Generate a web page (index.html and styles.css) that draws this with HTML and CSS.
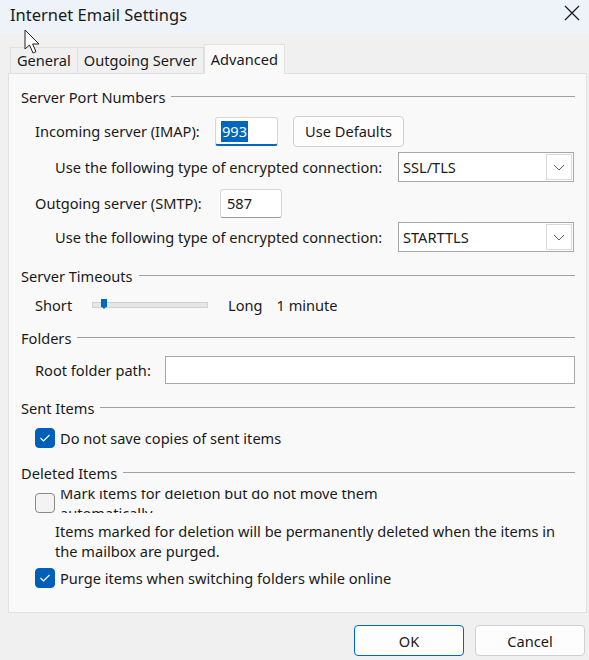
FILE: index.html
```html
<!DOCTYPE html>
<html lang="en">
<head>
    <meta charset="UTF-8">
    <meta name="viewport" content="width=device-width, initial-scale=1.0">
    <title>Internet Email Settings</title>
    <link rel="stylesheet" href="styles.css">
</head>
<body>

    <div class="titlebar">
        <span class="title">Internet Email Settings</span>
        <svg class="close" width="16" height="16" viewBox="0 0 16 16">
            <path d="M1 1 L15 15 M15 1 L1 15" stroke="#1a1a1a" stroke-width="1.3" fill="none"/>
        </svg>
    </div>

    <div class="tabs">
        <div class="tab">General</div>
        <div class="tab">Outgoing Server</div>
        <div class="tab active">Advanced</div>
    </div>

    <div class="panel">
        <div class="group-head">Server Port Numbers</div>

        <div class="row row-imap">
            <span class="label lbl-imap">Incoming server (IMAP):</span>
            <div class="port focused"><span class="selected-text">993</span></div>
            <button class="btn defaults">Use Defaults</button>
        </div>

        <div class="row row-enc">
            <span class="label sub lbl-enc">Use the following type of encrypted connection:</span>
            <div class="combo">
                <span>SSL/TLS</span>
                <span class="combo-arrow">
                    <svg width="12" height="7" viewBox="0 0 12 7"><path d="M1 1 L6 6 L11 1" stroke="#606060" stroke-width="1" fill="none"/></svg>
                </span>
            </div>
        </div>

        <div class="row row-smtp">
            <span class="label lbl-smtp">Outgoing server (SMTP):</span>
            <div class="port">587</div>
        </div>

        <div class="row row-enc2">
            <span class="label sub lbl-enc">Use the following type of encrypted connection:</span>
            <div class="combo">
                <span>STARTTLS</span>
                <span class="combo-arrow">
                    <svg width="12" height="7" viewBox="0 0 12 7"><path d="M1 1 L6 6 L11 1" stroke="#606060" stroke-width="1" fill="none"/></svg>
                </span>
            </div>
        </div>

        <div class="group-head head-timeouts">Server Timeouts</div>

        <div class="row row-slider">
            <span class="label lbl-short">Short</span>
            <div class="track"><span class="thumb"></span></div>
            <span class="lbl-long">Long</span>
            <span>1 minute</span>
        </div>

        <div class="group-head head-folders">Folders</div>

        <div class="row row-root">
            <span class="label lbl-root">Root folder path:</span>
            <div class="textbox"></div>
        </div>

        <div class="group-head head-sent">Sent Items</div>

        <div class="row row-check row-sent">
            <span class="check on">
                <svg width="12" height="10" viewBox="0 0 12 10"><path d="M1.5 5 L4.5 8 L10.5 2" stroke="#fff" stroke-width="1.2" fill="none"/></svg>
            </span>
            <span>Do not save copies of sent items</span>
        </div>

        <div class="group-head head-deleted">Deleted Items</div>

        <div class="row row-check row-mark">
            <span class="check"></span>
            <div class="clipped"><div class="clipped-inner">Mark items for deletion but do not move them<br>automatically</div></div>
        </div>

        <p class="note">Items marked for deletion will be permanently deleted when the items in the mailbox are purged.</p>

        <div class="row row-check row-purge">
            <span class="check on">
                <svg width="12" height="10" viewBox="0 0 12 10"><path d="M1.5 5 L4.5 8 L10.5 2" stroke="#fff" stroke-width="1.2" fill="none"/></svg>
            </span>
            <span>Purge items when switching folders while online</span>
        </div>
    </div>

    <div class="footer">
        <button class="btn ok">OK</button>
        <button class="btn cancel">Cancel</button>
    </div>

    <!-- mouse pointer -->
    <svg class="cursor" width="19" height="27" viewBox="0 0 19 27">
        <path d="M1 1 L1 20 L5.5 16 L9 24 L12 22.6 L8.6 15 L15 15 Z" fill="#fff" stroke="#222" stroke-width="1"/>
    </svg>

</body>
</html>
```

FILE: styles.css
```css
body {
    margin: 0;
    padding: 0;
    width: 589px;
    height: 660px;
    overflow: hidden;
    position: relative;
    background-color: #f0f0f0;
    color: #1a1a1a;
    font-family: "Noto Sans", "Open Sans", sans-serif;
    font-size: 14.6px;
}

button {
    font-family: inherit;
    font-size: 14.6px;
    color: #1a1a1a;
}

/* Title bar */
.titlebar {
    height: 34px;
    background-color: #eef3f9;
    display: flex;
    align-items: center;
    justify-content: space-between;
    padding: 0 9px 0 10px;
}

.title {
    font-size: 16.5px;
    margin-top: -6px;
}

.close {
    margin-top: -8px;
}

/* Tabs */
.tabs {
    display: flex;
    align-items: flex-end;
    padding-left: 10px;
    margin-top: 10px;
    height: 29px;
    position: relative;
    z-index: 1;
}

.tab {
    height: 25px;
    line-height: 25px;
    padding: 0 6px;
    border: 1px solid #e0e0e0;
    border-bottom: none;
    background-color: #f0f0f0;
}

.tab + .tab {
    border-left: none;
}

.tab.active {
    height: 29px;
    line-height: 28px;
    background-color: #f9f9f9;
    margin-bottom: -1px;
    border-left: 1px solid #e0e0e0;
}

/* Panel */
.panel {
    margin-left: 8px;
    width: 554px;
    height: 525px;
    background-color: #f9f9f9;
    border: 1px solid #e0e0e0;
    padding: 13px 11px 0 12px;
}

.group-head {
    display: flex;
    align-items: center;
    height: 20px;
    gap: 6px;
}

.group-head::after {
    content: "";
    flex: 1;
    height: 1px;
    background-color: #a0a0a0;
    margin-top: -2px;
}

.head-timeouts { margin-top: 14px; }
.head-folders { margin-top: 13px; }
.head-sent { margin-top: 14px; }
.head-deleted { margin-top: 15px; }

.row {
    display: flex;
    align-items: center;
    padding-left: 14px;
}

.label {
    flex: none;
}

.sub {
    padding-left: 20px;
}

.row-imap { height: 32px; margin-top: 8px; }
.row-enc { height: 30px; margin-top: 5px; }
.row-smtp { height: 30px; margin-top: 6px; }
.row-enc2 { height: 30px; margin-top: 4px; }
.row-slider { height: 20px; margin-top: 9px; }
.row-root { height: 28px; margin-top: 8px; }
.row-sent { height: 20px; margin-top: 10px; }
.row-mark { height: 20px; margin-top: 10px; }
.row-purge { height: 20px; margin-top: 7px; }

.lbl-imap { width: 180px; }
.lbl-smtp { width: 185px; }
.lbl-enc { width: 343px; }
.lbl-root { width: 130px; }
.lbl-short { width: 57px; }
.lbl-long { margin-left: 20px; margin-right: 14px; }

/* Port boxes */
.port {
    box-sizing: border-box;
    width: 62px;
    height: 29px;
    background-color: #fff;
    border: 1px solid #d6d6d6;
    border-bottom-color: #9a9a9a;
    border-radius: 3px;
    padding: 3px 0 0 6px;
    line-height: 20px;
}

.port.focused {
    width: 63px;
    border-bottom: 2px solid #0067c0;
    padding-left: 5px;
}

.selected-text {
    background-color: #0067c0;
    color: #fff;
    display: inline-block;
    line-height: 21px;
    padding: 0 1px;
}

.btn {
    box-sizing: border-box;
    height: 31px;
    background-color: #fdfdfd;
    border: 1px solid #d0d0d0;
    border-radius: 4px;
    padding: 0;
}

.defaults {
    width: 111px;
    margin-left: 15px;
}

/* Combo boxes */
.combo {
    box-sizing: border-box;
    width: 176px;
    height: 30px;
    background-color: #fff;
    border: 1px solid #a8a8a8;
    display: flex;
    align-items: center;
    justify-content: space-between;
    padding: 0 1px 0 4px;
}

.combo-arrow {
    box-sizing: border-box;
    width: 26px;
    height: 26px;
    border: 1px solid #d9d9d9;
    display: flex;
    align-items: center;
    justify-content: center;
}

/* Slider */
.track {
    box-sizing: border-box;
    width: 116px;
    height: 6px;
    background-color: #e6e6e6;
    border: 1px solid #d0d0d0;
    position: relative;
}

.thumb {
    position: absolute;
    left: 8px;
    top: -4px;
    width: 6px;
    height: 8px;
    background-color: #0067c0;
}

.thumb::after {
    content: "";
    position: absolute;
    left: 1px;
    top: 8px;
    border-left: 2px solid transparent;
    border-right: 2px solid transparent;
    border-top: 2px solid #0067c0;
}

/* Root folder */
.textbox {
    box-sizing: border-box;
    width: 410px;
    height: 28px;
    background-color: #fff;
    border: 1px solid #a8a8a8;
}

/* Checkboxes */
.row-check {
    gap: 5px;
}

.check {
    box-sizing: border-box;
    flex: none;
    width: 20px;
    height: 20px;
    border-radius: 4px;
    border: 1px solid #8a8a8a;
    background-color: #f3f3f3;
    display: flex;
    align-items: center;
    justify-content: center;
}

.check.on {
    background-color: #005fb8;
    border-color: #005fb8;
}

.clipped {
    height: 23px;
    margin-top: -3px;
    overflow: hidden;
}

.clipped-inner {
    margin-top: -7px;
    line-height: 20px;
}

.note {
    margin: 8px 0 0 34px;
    width: 520px;
    line-height: 20px;
}

/* Footer */
.footer {
    display: flex;
    justify-content: flex-end;
    gap: 11px;
    padding: 12px 4px 0 0;
}

.footer .btn {
    width: 110px;
    height: 31px;
}

.ok {
    border-color: #0067c0;
}

/* Mouse pointer, drawn over the tabs */
.cursor {
    position: absolute;
    left: 24px;
    top: 29px;
    z-index: 5;
}
```
